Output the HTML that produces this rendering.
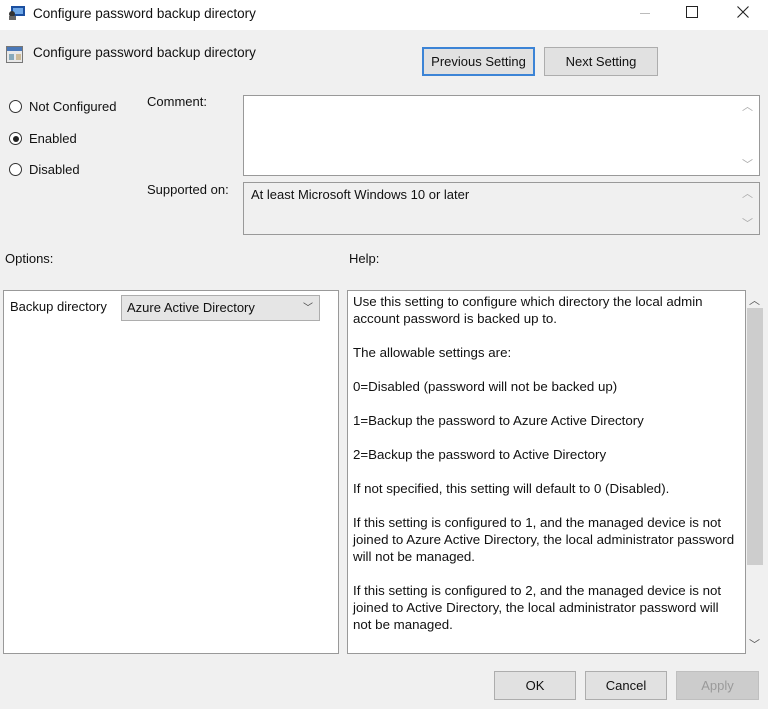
<!DOCTYPE html>
<html><head><style>
*{margin:0;padding:0;box-sizing:border-box}
body{width:768px;height:709px;background:#f0f0f0;font-family:"Liberation Sans",sans-serif;font-size:13px;color:#111;position:relative;overflow:hidden}
.a{position:absolute}
.tb{left:0;top:0;width:768px;height:30px;background:#fff}
.btn{position:absolute;background:#e1e1e1;border:1px solid #adadad;text-align:center;font-size:13px}
.box{position:absolute;background:#fff;border:1px solid #999}
.rad{position:absolute;width:13px;height:13px;border:1px solid #333;border-radius:50%;background:#fff}
.sb{position:absolute;color:#aaa;font-size:11px}
.help{font-size:13.3px}
.help p{margin-bottom:17px;line-height:17px}
</style></head><body>
<div class="a tb"></div>
<svg class="a" style="left:8px;top:5px" width="18" height="16"><rect x="3" y="1" width="14" height="10" fill="#1b4fa0"/><rect x="5" y="3" width="10" height="6" fill="#6fa8e8"/><circle cx="4" cy="9" r="3" fill="#333"/><rect x="1" y="11" width="7" height="4" fill="#666"/></svg>
<div class="a" style="left:33px;top:6px;font-size:13.5px">Configure password backup directory</div>
<div class="a" style="top:13px;width:10px;height:1px;background:#bbb;left:640px"></div>
<div class="a" style="left:686px;top:6px;width:12px;height:12px;border:1px solid #222"></div>
<svg class="a" style="left:737px;top:6px" width="12" height="12"><path d="M0.5 0.5L11.5 11.5M11.5 0.5L0.5 11.5" stroke="#222" stroke-width="1.1"/></svg>
<svg class="a" style="left:6px;top:46px" width="18" height="18"><rect x="0.5" y="0.5" width="16" height="16" fill="#e8e8e8" stroke="#777"/><rect x="1" y="1" width="15" height="4" fill="#4a78b8"/><rect x="3" y="8" width="5" height="6" fill="#8ab"/><rect x="10" y="8" width="5" height="6" fill="#cb9"/></svg>
<div class="a" style="left:33px;top:45px;font-size:13.5px">Configure password backup directory</div>
<div class="btn" style="left:422px;top:47px;width:113px;height:29px;border:2px solid #3c84d6;line-height:25px">Previous Setting</div>
<div class="btn" style="left:544px;top:47px;width:114px;height:29px;line-height:27px">Next Setting</div>
<div class="rad" style="left:9px;top:100px"></div><div class="a" style="left:29px;top:99px">Not Configured</div>
<div class="rad" style="left:9px;top:132px"></div><div class="a" style="left:13px;top:136px;width:6px;height:6px;border-radius:50%;background:#222"></div><div class="a" style="left:29px;top:131px">Enabled</div>
<div class="rad" style="left:9px;top:163px"></div><div class="a" style="left:29px;top:162px">Disabled</div>
<div class="a" style="left:147px;top:94px">Comment:</div>
<div class="box" style="left:243px;top:95px;width:517px;height:81px"></div>
<div class="sb" style="left:742px;top:98px">︿</div><div class="sb" style="left:742px;top:156px">﹀</div>
<div class="a" style="left:147px;top:182px">Supported on:</div>
<div class="box" style="left:243px;top:182px;width:517px;height:53px;background:#f0f0f0"></div>
<div class="a" style="left:251px;top:187px">At least Microsoft Windows 10 or later</div>
<div class="sb" style="left:742px;top:185px">︿</div><div class="sb" style="left:742px;top:215px">﹀</div>
<div class="a" style="left:5px;top:251px">Options:</div>
<div class="a" style="left:349px;top:251px">Help:</div>
<div class="box" style="left:3px;top:290px;width:336px;height:364px"></div>
<div class="a" style="left:10px;top:299px">Backup directory</div>
<div class="a" style="left:121px;top:295px;width:199px;height:26px;background:#e5e5e5;border:1px solid #adadad;padding:4px 5px">Azure Active Directory<span style="position:absolute;right:6px;top:3px;font-size:10px;color:#444">﹀</span></div>
<div class="box help" style="left:347px;top:290px;width:399px;height:364px;padding:2px 5px;overflow:hidden">
<p>Use this setting to configure which directory the local admin account password is backed up to.</p>
<p>The allowable settings are:</p>
<p>0=Disabled (password will not be backed up)</p>
<p>1=Backup the password to Azure Active Directory</p>
<p>2=Backup the password to Active Directory</p>
<p>If not specified, this setting will default to 0 (Disabled).</p>
<p>If this setting is configured to 1, and the managed device is not joined to Azure Active Directory, the local administrator password will not be managed.</p>
<p>If this setting is configured to 2, and the managed device is not joined to Active Directory, the local administrator password will not be managed.</p>
<p>If this setting is disabled, the password will not be backed up.</p>
</div>
<div class="a" style="left:746px;top:290px;width:18px;height:364px;background:#f0f0f0"></div>
<div class="a" style="left:747px;top:308px;width:16px;height:257px;background:#cdcdcd"></div>
<div class="sb" style="left:749px;top:292px;color:#555">︿</div><div class="sb" style="left:749px;top:636px;color:#555">﹀</div>
<div class="btn" style="left:494px;top:671px;width:82px;height:29px;line-height:27px">OK</div>
<div class="btn" style="left:585px;top:671px;width:82px;height:29px;line-height:27px">Cancel</div>
<div class="btn" style="left:676px;top:671px;width:83px;height:29px;line-height:27px;background:#ccc;border-color:#bfbfbf;color:#9a9a9a">Apply</div>
</body></html>
